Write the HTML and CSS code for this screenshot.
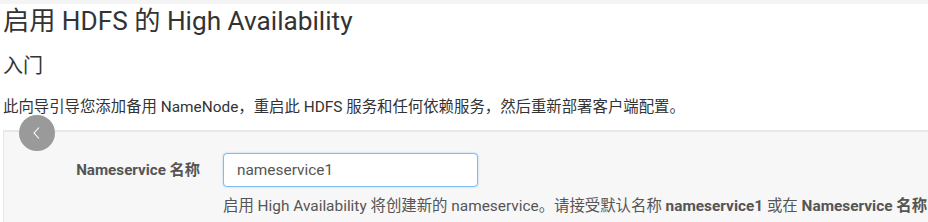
FILE: index.html
```
<!DOCTYPE html>
<html lang="zh-CN">
<head>
    <meta charset="UTF-8">
    <title>启用 HDFS 的 High Availability</title>
    <link rel="stylesheet" href="styles.css">
</head>
<body>
    <div class="top-strip"></div>
    <div class="wizard">
        <h1 class="wizard-title">启用 HDFS 的 High Availability</h1>
        <h2 class="step-title">入门</h2>
        <p class="intro">此向导引导您添加备用 NameNode，重启此 HDFS 服务和任何依赖服务，然后重新部署客户端配置。</p>

        <div class="panel">
            <button class="back-btn" type="button" aria-label="返回">
                <svg width="12" height="14" viewBox="0 0 12 14"><path d="M8 1.5 L3 7 L8 12.5" fill="none" stroke="#fff" stroke-width="1.1"/></svg>
            </button>
            <div class="form-row">
                <label class="form-label" for="ns">Nameservice 名称</label>
                <div class="form-field">
                    <input id="ns" class="text-input" type="text" value="nameservice1">
                    <div class="help">启用 High Availability 将创建新的 nameservice。请接受默认名称 <strong>nameservice1</strong> 或在 <strong>Nameservice 名称</strong></div>
                </div>
            </div>
        </div>
    </div>
</body>
</html>
```

FILE: styles.css
```
body {
    margin: 0;
    font-family: Roboto, "Noto Sans CJK SC", sans-serif;
    color: #333;
    background: #fff;
    overflow: hidden;
}
.top-strip {
    height: 4px;
    background: #f4f4f4;
}
.wizard {
    padding-left: 3px;
}
.wizard-title {
    margin: 0;
    padding-top: 2px;
    font-size: 26.2px;
    font-weight: 400;
    line-height: 30px;
}
.step-title {
    margin: 18px 0 0 0;
    font-size: 20px;
    font-weight: 400;
    line-height: 24px;
}
.intro {
    margin: 19px 0 0 0;
    font-size: 15.4px;
    line-height: 20px;
    white-space: nowrap;
}
.panel {
    position: relative;
    margin-top: 13px;
    background: #f7f7f7;
    border-top: 2px solid #e8e8e8;
    border-left: 1px solid #e8e8e8;
    padding: 21px 0 6px 0;
}
.back-btn {
    position: absolute;
    left: 15px;
    top: -17px;
    width: 36px;
    height: 36px;
    border-radius: 50%;
    border: none;
    background: #9a9a9a;
    padding: 0;
    display: flex;
    align-items: center;
    justify-content: center;
}
.form-row {
    display: flex;
    align-items: flex-start;
}
.form-label {
    width: 219px;
    padding-right: 23px;
    text-align: right;
    font-weight: 700;
    font-size: 15.2px;
    color: #555;
    line-height: 34px;
    flex-shrink: 0;
    box-sizing: border-box;
}
.form-field {
    white-space: nowrap;
}
.text-input {
    display: block;
    width: 255px;
    height: 34px;
    box-sizing: border-box;
    border: 1px solid #7fbdf0;
    box-shadow: 0 0 2px #9ccbf3;
    border-radius: 4px;
    padding: 0 13px;
    font-family: inherit;
    font-size: 15.4px;
    color: #555;
    background: #fff;
}
.help {
    margin-top: 9px;
    font-size: 15.4px;
    color: #555;
    line-height: 20px;
}
.help strong {
    font-weight: 700;
}
```
